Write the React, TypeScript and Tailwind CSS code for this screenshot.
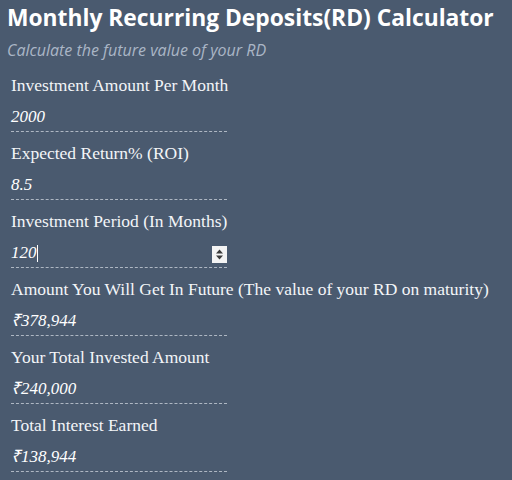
import React from 'react';

const fields = [
  { label: 'Investment Amount Per Month', value: '2000' },
  { label: 'Expected Return% (ROI)', value: '8.5' },
  { label: 'Investment Period (In Months)', value: '120', active: true },
  { label: 'Amount You Will Get In Future (The value of your RD on maturity)', value: '₹378,944' },
  { label: 'Your Total Invested Amount', value: '₹240,000' },
  { label: 'Total Interest Earned', value: '₹138,944' },
];

const Spinner = () => (
  <div className="absolute right-0 top-[7px] w-[15px] h-[17px] bg-[#f4f4f4] flex items-center justify-center">
    <svg width="9" height="13" viewBox="0 0 9 13">
      <path d="M4.5 1.5 L8 5.5 H1 Z" fill="#3b3b3b" />
      <path d="M4.5 11.5 L8 7.5 H1 Z" fill="#3b3b3b" />
    </svg>
  </div>
);

export default function App() {
  return (
    <div className="w-[512px] h-[480px] bg-[#4a5a6f] overflow-hidden pl-[7px] pt-[4px]">
      <h1 className="text-[22.8px] leading-[28px] font-bold text-white font-['Open_Sans',sans-serif]">
        Monthly Recurring Deposits(RD) Calculator
      </h1>
      <p className="mt-[8px] text-[16px] leading-[20px] italic text-[#aab6c6] font-['Open_Sans',sans-serif]">
        Calculate the future value of your RD
      </p>
      <div className="pl-[4px] mt-[15px] flex flex-col font-['Liberation_Serif',serif]">
        {fields.map((f) => (
          <div key={f.label} className="flex flex-col pb-[11px]">
            <label className="text-[17.5px] leading-[20px] text-[#f3f5f8] whitespace-nowrap">
              {f.label}
            </label>
            <div className="relative mt-[8px] w-[216px] h-[29px] border-b border-dashed border-[#aeb7c3] flex items-center">
              <span className="text-[17px] italic text-white">{f.value}</span>
              {f.active && <span className="w-px h-[17px] bg-white" />}
              {f.active && <Spinner />}
            </div>
          </div>
        ))}
      </div>
    </div>
  );
}
